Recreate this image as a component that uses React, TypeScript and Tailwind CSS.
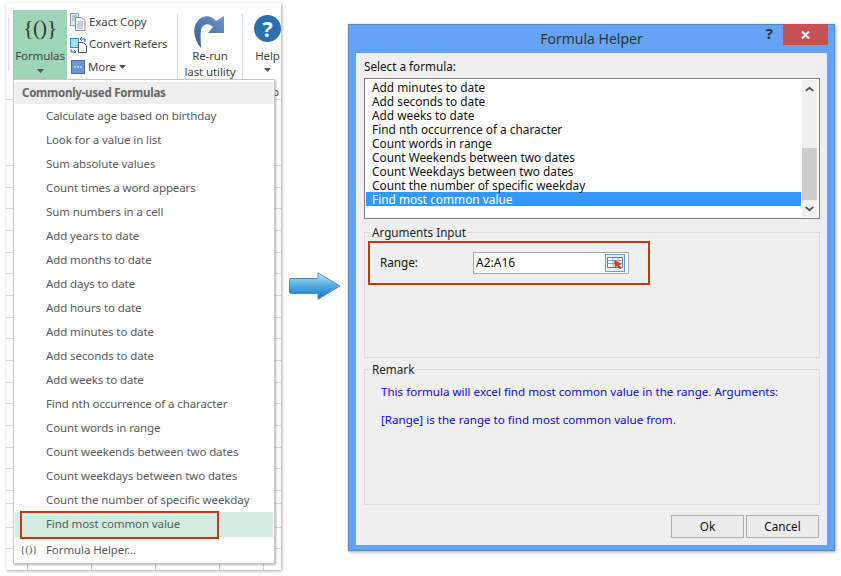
const ui = "font-['Noto_Sans',sans-serif]";

const menuItems = [
  "Calculate age based on birthday", "Look for a value in list", "Sum absolute values", "Count times a word appears",
  "Sum numbers in a cell", "Add years to date", "Add months to date", "Add days to date", "Add hours to date",
  "Add minutes to date", "Add seconds to date", "Add weeks to date", "Find nth occurrence of a character",
  "Count words in range", "Count weekends between two dates", "Count weekdays between two dates",
  "Count the number of specific weekday",
];

const listItems = [
  "Add minutes to date", "Add seconds to date", "Add weeks to date", "Find nth occurrence of a character",
  "Count words in range", "Count Weekends between two dates", "Count Weekdays between two dates",
  "Count the number of specific weekday",
];

const sheetLines = [165, 187, 208, 230, 252, 273, 295, 317, 338, 360, 382, 403, 425, 447, 468, 490, 503, 527, 548];

function Caret({ className = "" }: { className?: string }) {
  return <svg width="7" height="4" viewBox="0 0 7 4" className={className}><path d="M0 0h7L3.500 4z" fill="#555" /></svg>;
}

function CopyIcon() {
  return (
    <svg width="16" height="18" viewBox="0 0 16 18">
      <path d="M.5.5h8v12h-8z" fill="#dfe6f0" stroke="#8a9bb5" />
      <path d="M5.500 4.500h6l3.500 3v10h-9.500z" fill="#fff" stroke="#8a8f98" />
      <path d="M7 9h6M7 11h6M7 13h6M7 15h6M2 3h5M2 5h3M2 7h3" stroke="#8ea6c8" />
    </svg>
  );
}

function ConvertIcon() {
  return (
    <svg width="17" height="17" viewBox="0 0 17 17">
      <path d="M.5 2.500h8v9h-8z" fill="#a8dcf5" stroke="#2f8fc8" />
      <path d="M8.500 6.500h5l3 3v7h-8z" fill="#fff" stroke="#555" />
      <path d="M10 3h5v3M12 1l-2 2 2 2M1 13v3h5M4 14l2 2-2 1" stroke="#1f6fc0" fill="none" />
    </svg>
  );
}

function MoreIcon() {
  return (
    <svg width="14" height="14" viewBox="0 0 14 14" className="ml-px">
      <rect x=".5" y=".5" width="13" height="13" fill="#6f97d8" stroke="#4a6fb0" />
      <path d="M3 7h2M6 7h2M9 7h2" stroke="#fff" />
    </svg>
  );
}

function RerunIcon() {
  return (
    <svg width="32" height="35" viewBox="0 0 32 35">
      <defs>
        <linearGradient id="rr" x1="1" y1="0" x2="0" y2="1">
          <stop offset="0" stopColor="#6f96c6" />
          <stop offset="1" stopColor="#2f5f98" />
        </linearGradient>
      </defs>
      <path d="M7 34C1 27-1 18 1 12 4 3 14-2 22 7L30 2V19H14L19 13C14 8 8 10 7 16 6 22 7 28 7 34z" fill="url(#rr)" />
    </svg>
  );
}

function ArrowIcon() {
  return (
    <svg width="52" height="28" viewBox="0 0 52 28">
      <defs>
        <linearGradient id="ar" x1="0" y1="0" x2="0" y2="1">
          <stop offset="0" stopColor="#c4e6f8" />
          <stop offset="0.45" stopColor="#5ab0e4" />
          <stop offset="1" stopColor="#0f72c0" />
        </linearGradient>
      </defs>
      <path d="M2 6.500h27V.8L51 14 29 27.200V21.500H2q-1.500 0-1.500-1.500V8Q.5 6.500 2 6.500z" fill="url(#ar)" stroke="#4f8fb8" />
    </svg>
  );
}

function RefButton() {
  return (
    <div className="w-[20px] h-[18px] border border-[#5aa2e0] bg-[#e6f0fa] flex items-center justify-center">
      <svg width="16" height="12" viewBox="0 0 16 12">
        <path d="M.5.500h15v10H.5z" fill="#fff" stroke="#5f7f9f" />
        <path d="M1 3.500h14M1 6.500h14M6 1v9M11 1v9" stroke="#8fa8c0" />
        <path d="M7 3l8 4-3 1 3 3-2 1-3-3-2 2z" fill="#d8382a" />
      </svg>
    </div>
  );
}

function Group({ title, className, children }: { title: string; className: string; children?: React.ReactNode }) {
  return (
    <div className={`relative border border-[#dcdcdc] ${className}`}>
      <span className="absolute left-[6px] top-[-8px] bg-[#efefef] px-px leading-[15px] text-[#222]">{title}</span>
      {children}
    </div>
  );
}

function LeftPanel() {
  const cols = [21, 85, 149, 213, 257];
  return (
    <div className="relative w-[275px] h-[567px] mt-[3px] ml-[6px] shrink-0 bg-white shadow-[1px_1px_3px_rgba(0,0,0,0.35)] overflow-hidden">
      {/* ribbon */}
      <div className="h-[97px] border-b border-[#d8d8d8] flex items-start pt-[7px] text-[#444] text-[11.5px] tracking-[-0.1px]">
        <div className="w-px h-[54px] mt-[7px] bg-[#e0e0e0] ml-[2px]" />
        <div className="w-[54px] h-[69px] ml-[4px] bg-[#9fd5b7] flex flex-col items-center">
          <span className="font-['Liberation_Serif',serif] text-[21px] leading-[24px] mt-[6px] text-[#333]">{"{()}"}</span>
          <span className="leading-[16px] mt-[8px]">Formulas</span>
          <Caret className="mt-[5px]" />
        </div>
        <div className="flex flex-col w-[110px] pl-[3px] gap-[4px] pt-[2px]">
          <div className="flex items-center gap-[3px] h-[19px]"><CopyIcon /><span>Exact Copy</span></div>
          <div className="flex items-center gap-[2px] h-[18px]"><ConvertIcon /><span>Convert Refers</span></div>
          <div className="flex items-center gap-[3px] h-[20px]">
            <MoreIcon />
            <span>More</span><Caret />
          </div>
        </div>
        <div className="w-px h-[68px] mt-[4px] bg-[#dcdcdc]" />
        <div className="w-[64px] flex flex-col items-center">
          <div className="mt-[4px]"><RerunIcon /></div>
          <span className="leading-[16px] mt-[-1px]">Re-run</span>
          <span className="leading-[16px]">last utility</span>
        </div>
        <div className="w-px h-[68px] mt-[4px] bg-[#dcdcdc]" />
        <div className="flex flex-col items-center ml-[11px]">
          <div className="w-[27px] h-[27px] mt-[5px] rounded-full bg-[#2a6fb0] text-white text-[22px] leading-[27px] font-bold text-center">?</div>
          <span className="leading-[16px] mt-[6px]">Help</span>
          <Caret className="mt-[4px]" />
        </div>
      </div>
      <span className="absolute left-[266px] top-[81px] text-[11.5px] leading-[16px] text-[#555]">p</span>
      {/* sheet grid behind menu */}
      {sheetLines.map((y) => (
        <div key={y} className="absolute left-0 right-0 h-px bg-[#d8d8d8]" style={{ top: y - 3 }} />
      ))}
      {cols.map((x) => (
        <div key={x} className="absolute bottom-0 h-[10px] w-px bg-[#d0d0d0]" style={{ left: x }} />
      ))}
      {/* menu */}
      <div className="absolute left-[7px] top-[76px] w-[262px] h-[485px] bg-white border border-[#c8c8c8] shadow-[1px_1px_2px_rgba(0,0,0,0.3)] pt-[2px] px-px text-[#5a5a5a] text-[11.5px] tracking-[-0.1px]">
        <div className="h-[22px] bg-[#eeeeee] pl-[7px] leading-[22px] font-bold tracking-[-0.25px] text-[#666]">Commonly-used Formulas</div>
        {menuItems.map((t) => (
          <div key={t} className="h-[24px] pl-[31px] leading-[24px] whitespace-nowrap">{t}</div>
        ))}
        <div className="relative h-[25px] bg-[#d3ecdf] pl-[31px] leading-[24px]">
          Find most common value
          <div className="absolute left-[5px] top-[-1px] w-[199px] h-[28px] border-2 border-[#c0390f]" />
        </div>
        <div className="h-[25px] flex items-center leading-[25px]">
          <span className="w-[31px] pl-[5px] font-['Liberation_Serif',serif] text-[11px]">{"{()}"}</span>
          <span>Formula Helper...</span>
        </div>
      </div>
    </div>
  );
}

function Dialog() {
  return (
    <div className="w-[487px] h-[527px] mt-[24px] ml-[7px] shrink-0 bg-[#64a3f5] border border-[#5b88bb] shadow-[1px_1px_3px_rgba(0,0,0,0.35)] flex flex-col px-[7px] pb-[5px] text-[11.7px] text-[#111]">
      <div className="relative h-[28px] shrink-0 flex items-center justify-center">
        <span className="text-[14px] text-[#333] mt-[-1px]">Formula Helper</span>
        <span className="absolute right-[54px] top-[-1px] text-[15px] leading-[18px] font-bold text-[#333]">?</span>
        <div className="absolute right-[-1px] top-[-1px] w-[45px] h-[21px] bg-[#c75050] flex items-center justify-center">
          <svg width="9" height="8" viewBox="0 0 9 8"><path d="M1 .5l7 7M8 .5l-7 7" stroke="#fff" strokeWidth="2" /></svg>
        </div>
      </div>
      <div className="flex-1 bg-[#efefef] flex flex-col pl-[8px] pr-[7px] relative">
        <div className="h-[24px] leading-[24px] mt-[1px]">Select a formula:</div>
        <div className="h-[141px] bg-white border border-[#7b8088] flex pl-px pr-[2px] pt-px text-[11.85px]">
          <div className="flex-1 min-w-0">
            {listItems.map((t) => (
              <div key={t} className="h-[14px] pl-[6px] leading-[14px] whitespace-nowrap">{t}</div>
            ))}
            <div className="h-[14px] pl-[6px] leading-[14px] bg-[#3399ff] text-white">Find most common value</div>
          </div>
          <div className="w-[15px] ml-px bg-[#f0f0f0] flex flex-col items-center h-[137px]">
            <svg width="9" height="6" viewBox="0 0 9 6" className="mt-[6px]"><path d="M0 4.500l4.500-4 4.500 4-1.500 1-3-2.500-3 2.500z" fill="#555" /></svg>
            <div className="w-[15px] h-[52px] mt-[56px] bg-[#cdcdcd]" />
            <svg width="9" height="6" viewBox="0 0 9 6" className="mt-[6px]"><path d="M0 1.500l4.500 4 4.500-4-1.500-1-3 2.500-3-2.500z" fill="#555" /></svg>
          </div>
        </div>
        <Group title="Arguments Input" className="h-[126px] mt-[13px] shrink-0">
          <div className="mt-[8px] ml-[3px] w-[282px] h-[44px] border-2 border-[#c0390f] flex items-center pl-[10px]">
            <span className="w-[93px]">Range:</span>
            <div className="w-[156px] h-[22px] bg-white border border-[#aaaaaa] flex items-center justify-between pl-[2px] pr-[3px]">
              <span className="text-[12px]">A2:A16</span>
              <RefButton />
            </div>
          </div>
        </Group>
        <Group title="Remark" className="h-[136px] mt-[11px] shrink-0">
          <p className="absolute left-[16px] top-[13px] whitespace-nowrap text-[11.6px] text-[#0b0bd8]">This formula will excel find most common value in the range. Arguments:</p>
          <p className="absolute left-[16px] top-[41px] whitespace-nowrap text-[11.6px] text-[#0b0bd8]">[Range] is the range to find most common value from.</p>
        </Group>
        <div className="flex justify-end gap-[2px] mt-[10px] pr-px">
          <div className="w-[73px] h-[23px] bg-[#ececec] border border-[#adadad] text-center leading-[20px]">Ok</div>
          <div className="w-[73px] h-[23px] bg-[#ececec] border border-[#adadad] text-center leading-[20px]">Cancel</div>
        </div>
      </div>
    </div>
  );
}

export default function App() {
  return (
    <div className={`w-[841px] h-[576px] bg-white flex items-start overflow-hidden ${ui}`}>
      <LeftPanel />
      <div className="ml-[8px] mt-[272px] shrink-0"><ArrowIcon /></div>
      <Dialog />
    </div>
  );
}
